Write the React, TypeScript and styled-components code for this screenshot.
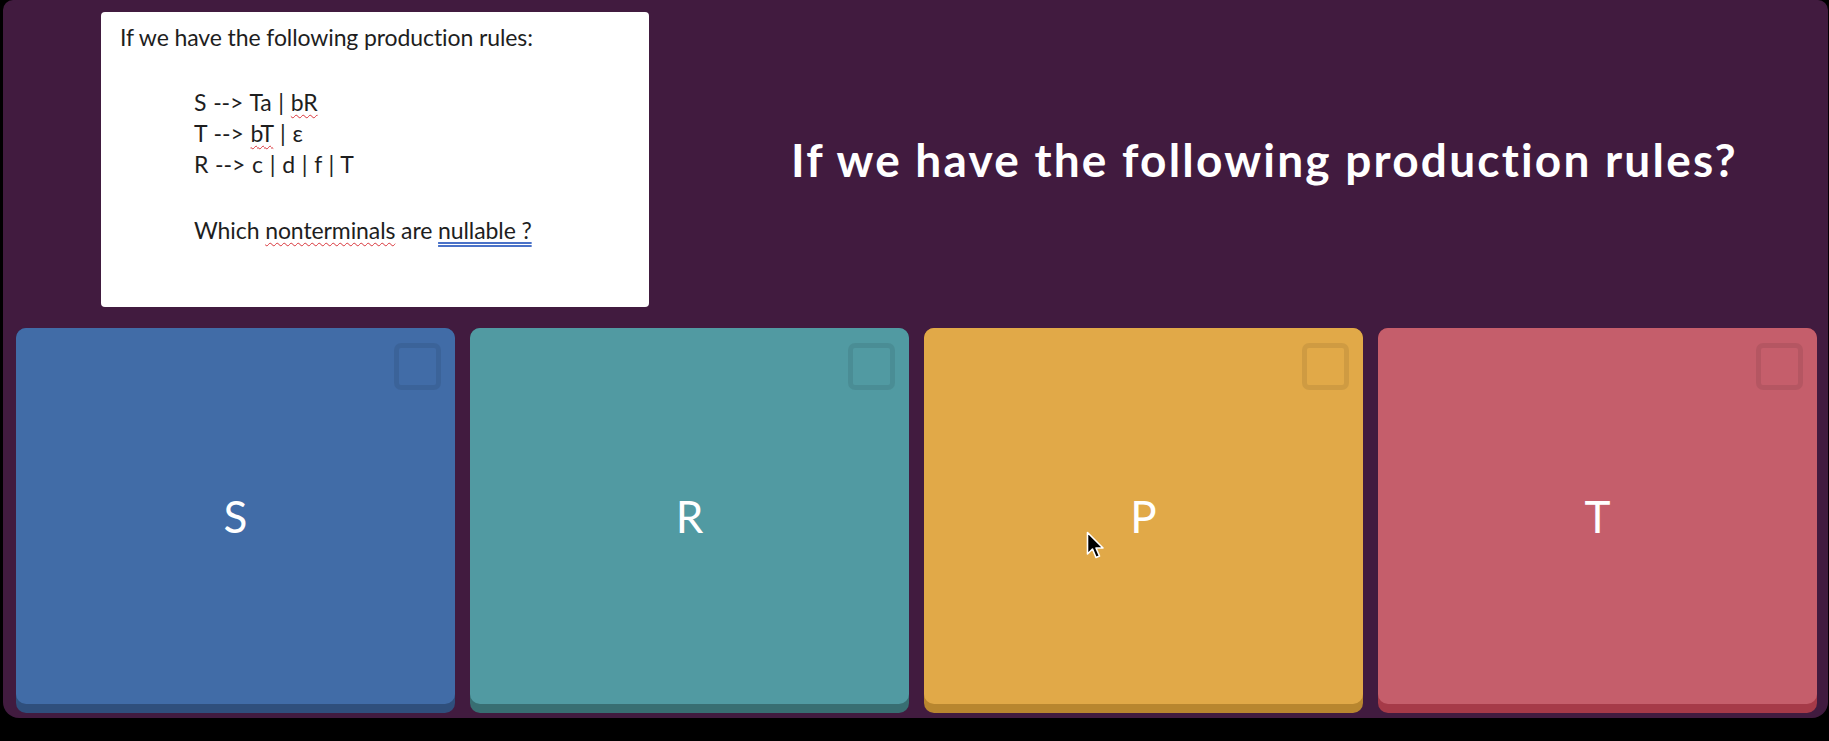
import React from 'react';
import styled, { createGlobalStyle } from 'styled-components';

const GlobalStyle = createGlobalStyle`
  html, body {
    margin: 0;
    padding: 0;
    background: #000;
  }

  #root {
    width: 1829px;
    height: 741px;
    overflow: hidden;
  }
`;

interface AnswerOption {
  label: string;
  face: string;
  base: string;
  hasCursor?: boolean;
}

const options: AnswerOption[] = [
  { label: 'S', face: '#416ca7', base: '#2f4f7c' },
  { label: 'R', face: '#519aa2', base: '#386e72' },
  { label: 'P', face: '#e1a948', base: '#b8862f', hasCursor: true },
  { label: 'T', face: '#c55e6b', base: '#a63a48' },
];

const Panel = styled.div`
  box-sizing: border-box;
  margin-left: 3px;
  width: 1825px;
  height: 718px;
  padding: 12px 10px 5px 13px;
  background: #411b3f;
  border-radius: 10px 10px 16px 16px;
  display: flex;
  flex-direction: column;
  gap: 21px;
`;

const QuestionRow = styled.div`
  display: flex;
  align-items: center;
  height: 295px;
`;

const SlideImage = styled.div`
  box-sizing: border-box;
  margin-left: 85px;
  width: 548px;
  height: 295px;
  flex-shrink: 0;
  background: #fff;
  border-radius: 4px;
  padding: 13px 0 0 19px;
  font-family: Lato, 'Open Sans', sans-serif;
  font-size: 23px;
  color: #1e1e1e;
  letter-spacing: -0.1px;
`;

const SlideHeading = styled.div`
  line-height: 24px;
`;

const RuleList = styled.div`
  margin-top: 38px;
  margin-left: 74px;
  display: flex;
  flex-direction: column;
  line-height: 31px;
  word-spacing: 1px;
`;

const SlideQuestion = styled.div`
  margin-top: 38px;
  margin-left: 74px;
  line-height: 24px;
`;

const Misspelled = styled.span`
  text-decoration: underline wavy #d8343a;
  text-decoration-thickness: 1px;
  text-underline-offset: 3px;
`;

const Flagged = styled.span`
  text-decoration: underline double #4a72c8;
  text-underline-offset: 3px;
`;

const TitleArea = styled.div`
  flex: 1;
  display: flex;
  justify-content: center;
  padding-left: 62px;
`;

const Title = styled.h1`
  margin: 0;
  font-family: Lato, 'Noto Sans', sans-serif;
  font-weight: 700;
  font-size: 46px;
  letter-spacing: 2.2px;
  color: #fff;
  white-space: nowrap;
`;

const AnswerGrid = styled.div`
  display: grid;
  grid-template-columns: repeat(4, 439px);
  gap: 15px;
  height: 385px;
`;

const AnswerCard = styled.div<{ $base: string }>`
  position: relative;
  display: flex;
  flex-direction: column;
  background: ${(p) => p.$base};
  border-radius: 10px;
  padding-bottom: 9px;
`;

const CardFace = styled.div<{ $face: string }>`
  position: relative;
  flex: 1;
  display: flex;
  align-items: center;
  justify-content: center;
  background: ${(p) => p.$face};
  border-radius: 10px;
`;

const CheckBox = styled.div`
  position: absolute;
  top: 15px;
  right: 14px;
  box-sizing: border-box;
  width: 47px;
  height: 47px;
  border: 5px solid rgba(0, 0, 0, 0.08);
  border-radius: 7px;
`;

const AnswerLabel = styled.span`
  font-family: Lato, 'Noto Sans', sans-serif;
  font-size: 44px;
  font-weight: 400;
  color: #fff;
`;

const Pointer = styled.svg`
  position: absolute;
  left: 162px;
  top: 203px;
`;

const CursorIcon = () => (
  <Pointer width="19" height="29" viewBox="0 0 19 29">
    <path
      d="M1.5 1.5 L1.5 23 L6.5 18 L10 26.5 L13.5 25 L10 17 L17 17 Z"
      fill="#000"
      stroke="#fff"
      strokeWidth="1.6"
      strokeLinejoin="round"
    />
  </Pointer>
);

export default function App() {
  return (
    <>
      <GlobalStyle />
      <Panel>
        <QuestionRow>
          <SlideImage>
            <SlideHeading>If we have the following production rules:</SlideHeading>
            <RuleList>
              <span>
                S --&gt; Ta | <Misspelled>bR</Misspelled>
              </span>
              <span>
                T --&gt; <Misspelled>bT</Misspelled> | ε
              </span>
              <span>R --&gt; c | d | f | T</span>
            </RuleList>
            <SlideQuestion>
              Which <Misspelled>nonterminals</Misspelled> are <Flagged>nullable ?</Flagged>
            </SlideQuestion>
          </SlideImage>
          <TitleArea>
            <Title>If we have the following production rules?</Title>
          </TitleArea>
        </QuestionRow>
        <AnswerGrid>
          {options.map((opt) => (
            <AnswerCard key={opt.label} $base={opt.base}>
              <CardFace $face={opt.face}>
                <CheckBox />
                <AnswerLabel>{opt.label}</AnswerLabel>
                {opt.hasCursor && <CursorIcon />}
              </CardFace>
            </AnswerCard>
          ))}
        </AnswerGrid>
      </Panel>
    </>
  );
}
